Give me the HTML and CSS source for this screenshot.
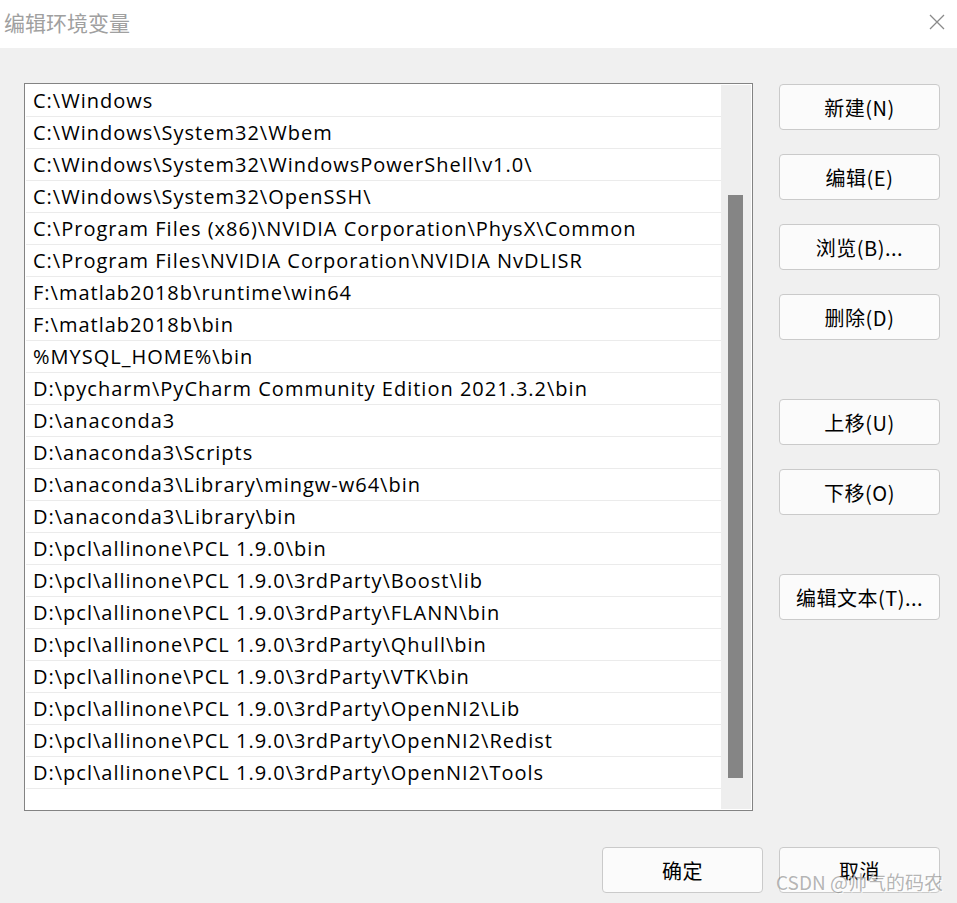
FILE: index.html
```html
<!DOCTYPE html>
<html lang="zh">
    <head>
        <meta charset="UTF-8" />
        <title>编辑环境变量</title>
        <link rel="stylesheet" href="styles.css">
    </head>
    <body>
        <div class="titlebar">
            <span class="title">编辑环境变量</span>
            <svg class="close" width="16" height="16" viewBox="0 0 16 16">
                <path d="M1 1 L15 15 M15 1 L1 15" stroke="#8a8a8a" stroke-width="1.3" fill="none" />
            </svg>
        </div>

        <div class="content">
            <div class="main">
                <div class="list">
                    <div class="rows">
                        <div class="row">C:\Windows</div>
                        <div class="row">C:\Windows\System32\Wbem</div>
                        <div class="row">C:\Windows\System32\WindowsPowerShell\v1.0\</div>
                        <div class="row">C:\Windows\System32\OpenSSH\</div>
                        <div class="row">C:\Program Files (x86)\NVIDIA Corporation\PhysX\Common</div>
                        <div class="row">C:\Program Files\NVIDIA Corporation\NVIDIA NvDLISR</div>
                        <div class="row">F:\matlab2018b\runtime\win64</div>
                        <div class="row">F:\matlab2018b\bin</div>
                        <div class="row">%MYSQL_HOME%\bin</div>
                        <div class="row">D:\pycharm\PyCharm Community Edition 2021.3.2\bin</div>
                        <div class="row">D:\anaconda3</div>
                        <div class="row">D:\anaconda3\Scripts</div>
                        <div class="row">D:\anaconda3\Library\mingw-w64\bin</div>
                        <div class="row">D:\anaconda3\Library\bin</div>
                        <div class="row">D:\pcl\allinone\PCL 1.9.0\bin</div>
                        <div class="row">D:\pcl\allinone\PCL 1.9.0\3rdParty\Boost\lib</div>
                        <div class="row">D:\pcl\allinone\PCL 1.9.0\3rdParty\FLANN\bin</div>
                        <div class="row">D:\pcl\allinone\PCL 1.9.0\3rdParty\Qhull\bin</div>
                        <div class="row">D:\pcl\allinone\PCL 1.9.0\3rdParty\VTK\bin</div>
                        <div class="row">D:\pcl\allinone\PCL 1.9.0\3rdParty\OpenNI2\Lib</div>
                        <div class="row">D:\pcl\allinone\PCL 1.9.0\3rdParty\OpenNI2\Redist</div>
                        <div class="row">D:\pcl\allinone\PCL 1.9.0\3rdParty\OpenNI2\Tools</div>
                    </div>
                    <div class="scrollbar">
                        <div class="thumb"></div>
                    </div>
                </div>

                <div class="side">
                    <div class="btn">新建(N)</div>
                    <div class="btn">编辑(E)</div>
                    <div class="btn">浏览(B)...</div>
                    <div class="btn">删除(D)</div>
                    <div class="btn gap">上移(U)</div>
                    <div class="btn">下移(O)</div>
                    <div class="btn gap">编辑文本(T)...</div>
                </div>
            </div>

            <div class="footer">
                <div class="btn">确定</div>
                <div class="btn">取消</div>
            </div>
            <div class="watermark">CSDN @帅气的码农</div>
        </div>
    </body>
</html>
```

FILE: styles.css
```css
body {
    margin: 0;
    width: 957px;
    height: 903px;
    overflow: hidden;
    font-family: "Open Sans", "Noto Sans CJK SC", sans-serif;
    font-size: 20px;
    color: #000;
    background: #f0f0f0;
}
.titlebar {
    height: 48px;
    background: #fff;
    display: flex;
    align-items: center;
    justify-content: space-between;
    padding: 0 12px 0 4px;
}
.title {
    color: #a0a0a0;
    font-family: "Noto Sans CJK SC", sans-serif;
    font-size: 21px;
    margin-top: -4px;
}
.close {
    margin-top: -4px;
}
.content {
    position: relative;
    height: 855px;
    padding: 35px 0 0 24px;
    box-sizing: border-box;
}
.main {
    display: flex;
    align-items: flex-start;
}
.list {
    width: 729px;
    height: 728px;
    box-sizing: border-box;
    border: 1px solid #838383;
    padding: 1px;
    background: #fff;
    display: flex;
}
.rows {
    width: 695px;
}
.row {
    height: 32px;
    box-sizing: border-box;
    border-bottom: 1px solid #ebebeb;
    padding-left: 7px;
    line-height: 31px;
    letter-spacing: 1px;
    white-space: nowrap;
}
.scrollbar {
    width: 30px;
    background: #eeeeee;
    padding-top: 110px;
    box-sizing: border-box;
}
.thumb {
    width: 15px;
    height: 583px;
    margin-left: 7px;
    background: #858585;
}
.side {
    margin-left: 26px;
    margin-top: 1px;
    display: flex;
    flex-direction: column;
    gap: 24px;
}
.btn {
    width: 161px;
    height: 46px;
    box-sizing: border-box;
    border: 1px solid #cacaca;
    border-radius: 4px;
    background: #fbfbfb;
    display: flex;
    align-items: center;
    justify-content: center;
    font-family: "Noto Sans CJK SC", sans-serif;
    font-size: 20px;
    letter-spacing: 0.5px;
}
.side .gap {
    margin-top: 35px;
}
.footer {
    display: flex;
    justify-content: flex-end;
    gap: 16px;
    margin-top: 36px;
    padding-right: 17px;
}
.watermark {
    position: absolute;
    right: 14px;
    bottom: 8px;
    color: rgba(120, 120, 120, 0.55);
    font-family: "Noto Sans CJK SC", sans-serif;
    font-size: 19px;
    text-shadow: 1px 1px 0 rgba(255, 255, 255, 0.8);
}
```
